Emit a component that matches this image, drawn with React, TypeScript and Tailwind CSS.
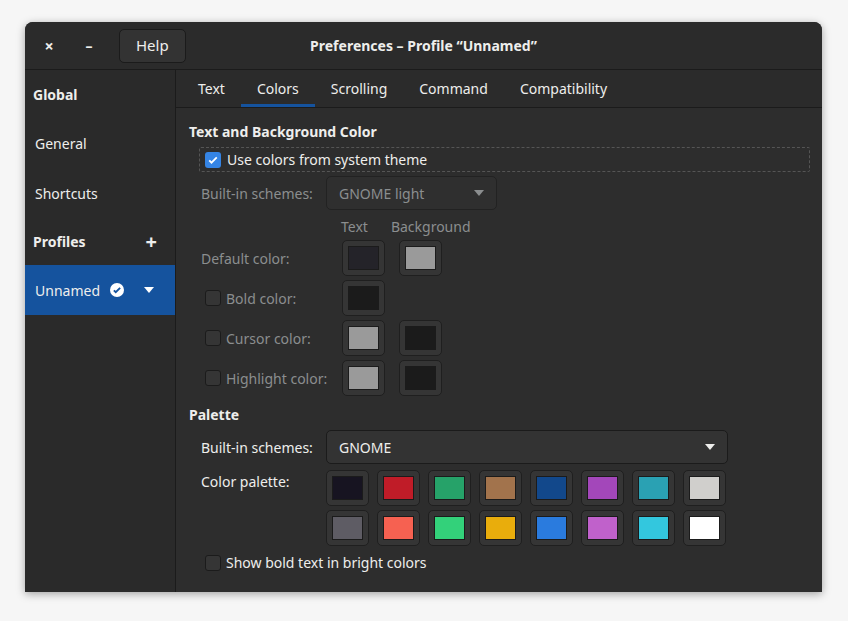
import React from 'react';

const Check = () => (
  <svg viewBox="0 0 16 16" className="w-3 h-3"><path d="M3 8.5l3 3 7-7" stroke="white" strokeWidth="2.4" fill="none" /></svg>
);

const Box = ({ checked = false }: { checked?: boolean }) =>
  checked ? (
    <span className="w-4 h-4 rounded-[3px] bg-[#3584e4] flex items-center justify-center"><Check /></span>
  ) : (
    <span className="w-4 h-4 rounded-[3px] border border-[#1b1b1b] bg-[#353535]" />
  );

const Swatch = ({ c, w = 'w-[43px]' }: { c: string; w?: string }) => (
  <div className={`${w} h-[36px] rounded-[5px] bg-[#353535] border border-[#1f1f1f] p-[5px]`}>
    <div className="w-full h-full border border-[#1b1b1b]" style={{ background: c }} />
  </div>
);

const Caret = () => (
  <svg viewBox="0 0 10 6" className="w-[10px] h-[6px]"><path d="M0 0h10L5 6z" fill="currentColor" /></svg>
);

const row1 = ['#171421', '#c01c28', '#26a269', '#a2734c', '#12488b', '#a347ba', '#2aa1b3', '#d0cfcc'];
const row2 = ['#5e5c64', '#f66151', '#33d17a', '#e9ad0c', '#2a7bde', '#c061cb', '#33c7de', '#ffffff'];

export default function App() {
  return (
    <div className="w-[848px] h-[621px] bg-[#f6f6f6] pt-[22px] pl-[25px]" style={{ fontFamily: '"Noto Sans", sans-serif' }}>
      <div className="w-[797px] h-[570px] bg-[#2d2d2d] rounded-t-[8px] overflow-hidden shadow-[0_2px_8px_rgba(0,0,0,0.35)] flex flex-col text-[14px] text-[#eeeeec]">
        {/* Title bar */}
        <div className="h-[48px] bg-[#2b2b2b] border-b border-[#1b1b1b] flex items-center relative shrink-0">
          <span className="w-[48px] text-center text-[16px] font-bold">×</span>
          <span className="w-[32px] text-center font-bold">–</span>
          <button className="ml-[14px] h-[34px] px-[16px] rounded-[5px] bg-[#333333] border border-[#1b1b1b] text-[15px] text-[#eeeeec]">Help</button>
          <div className="absolute left-0 right-0 text-center font-bold pointer-events-none">Preferences – Profile “Unnamed”</div>
        </div>
        <div className="flex flex-1">
          {/* Sidebar */}
          <div className="w-[151px] bg-[#2a2a2a] border-r border-[#1b1b1b] flex flex-col">
            <div className="h-[49px] flex items-center pl-[8px] font-bold">Global</div>
            <div className="h-[49px] flex items-center pl-[10px]">General</div>
            <div className="h-[50px] flex items-center pl-[10px]">Shortcuts</div>
            <div className="h-[47px] flex items-center pl-[8px] pr-[18px] font-bold justify-between"><span>Profiles</span><span className="text-[20px] font-bold">+</span></div>
            <div className="h-[50px] bg-[#15539e] flex items-center pl-[10px]">
              <span>Unnamed</span>
              <span className="ml-[10px] w-[14px] h-[14px] rounded-full bg-white flex items-center justify-center">
                <svg viewBox="0 0 16 16" className="w-[10px] h-[10px]"><path d="M3 8.5l3 3 7-7" stroke="#15539e" strokeWidth="3" fill="none" /></svg>
              </span>
              <span className="ml-[20px] text-white"><Caret /></span>
            </div>
          </div>
          {/* Main */}
          <div className="flex-1 flex flex-col">
            <div className="h-[38px] bg-[#2b2b2b] border-b border-[#1b1b1b] flex items-stretch pl-[6px]">
              {['Text', 'Colors', 'Scrolling', 'Command', 'Compatibility'].map((t) => (
                <div key={t} className={`px-[16px] flex items-center ${t === 'Colors' ? 'border-b-[3px] border-[#15539e] pt-[3px]' : ''}`}>{t}</div>
              ))}
            </div>
            <div className="pl-[13px] pr-[12px] pt-[13px]">
              <div className="font-bold">Text and Background Color</div>
              <div className="mt-[5px] ml-[10px] h-[25px] border border-dashed border-[#555] rounded-[2px] flex items-center gap-[6px] pl-[5px]">
                <Box checked /> <span>Use colors from system theme</span>
              </div>
              <div className="text-[#8b8e8f]">
                <div className="flex items-center mt-[4px] ml-[12px] h-[34px]">
                  <span className="w-[125px]">Built-in schemes:</span>
                  <div className="w-[171px] h-[34px] rounded-[5px] bg-[#2f2f2f] border border-[#222] flex items-center justify-between px-[12px]">GNOME light <Caret /></div>
                </div>
                <div className="flex ml-[152px] mt-[6px] gap-[23px]"><span>Text</span><span>Background</span></div>
                <div className="flex items-center ml-[12px] mt-[3px] h-[36px]">
                  <span className="w-[141px]">Default color:</span>
                  <Swatch c="#242329" /><span className="w-[14px]" /><Swatch c="#9a9a9a" />
                </div>
                {[['Bold color:', '#1b1b1b', null], ['Cursor color:', '#9a9a9a', '#1b1b1b'], ['Highlight color:', '#9a9a9a', '#1b1b1b']].map(([l, a, b]) => (
                  <div key={l as string} className="flex items-center ml-[16px] mt-[4px] h-[36px]">
                    <span className="w-[137px] flex items-center gap-[5px]"><Box />{l}</span>
                    <Swatch c={a as string} />{b && <><span className="w-[14px]" /><Swatch c={b} /></>}
                  </div>
                ))}
              </div>
              <div className="font-bold mt-[8px]">Palette</div>
              <div className="flex items-center ml-[12px] mt-[5px] h-[34px]">
                <span className="w-[125px]">Built-in schemes:</span>
                <div className="w-[402px] h-[34px] rounded-[5px] bg-[#333] border border-[#1b1b1b] flex items-center justify-between px-[12px]">GNOME <Caret /></div>
              </div>
              <div className="flex ml-[12px] mt-[6px]">
                <span className="w-[125px] pt-[1px]">Color palette:</span>
                <div className="flex flex-col gap-[4px]">
                  {[row1, row2].map((r, i) => (
                    <div key={i} className="flex gap-[8px]">{r.map((c) => <Swatch key={c} c={c} />)}</div>
                  ))}
                </div>
              </div>
              <div className="flex items-center gap-[5px] ml-[16px] mt-[6px]"><Box /> Show bold text in bright colors</div>
            </div>
          </div>
        </div>
      </div>
    </div>
  );
}
